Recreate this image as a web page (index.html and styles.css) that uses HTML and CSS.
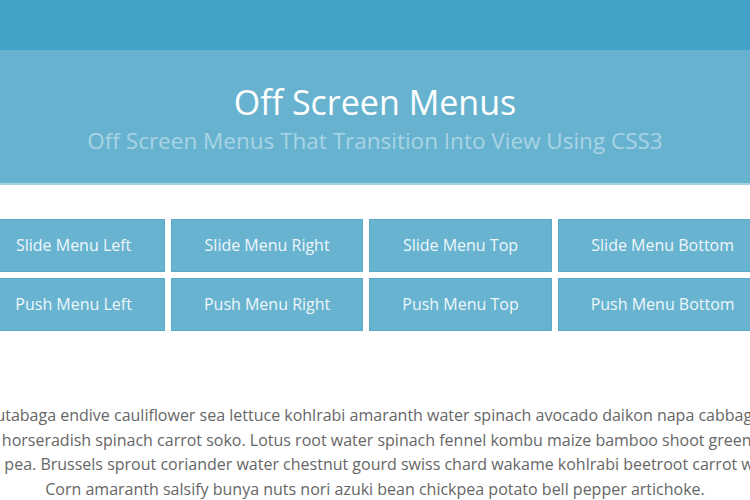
FILE: index.html
```html
<!DOCTYPE html>
<html>

<head>
  <title>Off Screen Menus</title>
  <link rel="stylesheet" href="styles.css">
</head>

<body>
  <div class="topbar"></div>
  <header class="intro">
    <h1 class="intro-title">Off Screen Menus</h1>
    <p class="intro-sub">Off Screen Menus That Transition Into View Using CSS3</p>
  </header>
  <div class="main">
    <nav class="menu-grid">
      <a class="menu-btn">Slide Menu Left</a>
      <a class="menu-btn">Slide Menu Right</a>
      <a class="menu-btn">Slide Menu Top</a>
      <a class="menu-btn">Slide Menu Bottom</a>
      <a class="menu-btn">Push Menu Left</a>
      <a class="menu-btn">Push Menu Right</a>
      <a class="menu-btn">Push Menu Top</a>
      <a class="menu-btn">Push Menu Bottom</a>
    </nav>
    <p class="veggies">
      rutabaga endive cauliflower sea lettuce kohlrabi amaranth water spinach avocado daikon napa cabbage<br>
      raisin horseradish spinach carrot soko. Lotus root water spinach fennel kombu maize bamboo shoot green bean<br>
      gram corn pea. Brussels sprout coriander water chestnut gourd swiss chard wakame kohlrabi beetroot carrot watercress.<br>
      Corn amaranth salsify bunya nuts nori azuki bean chickpea potato bell pepper artichoke.
    </p>
  </div>
</body>

</html>
```

FILE: styles.css
```css
body, html {
  margin: 0;
  padding: 0;
}

body {
  background: #fff;
  font-family: "Open Sans", "Noto Sans", sans-serif;
  overflow: hidden;
}

.topbar {
  height: 50px;
  background: #42a2c7;
}

.intro {
  background: #67b3cf;
  border-bottom: 2px solid #a3d2e3;
  padding: 32px 0 28px;
  text-align: center;
}

.intro-title {
  margin: 0;
  font-size: 34px;
  font-weight: 400;
  line-height: 40px;
  color: #fff;
}

.intro-sub {
  margin: 5px 0 0;
  font-size: 22.5px;
  line-height: 28px;
  color: #a8d4e5;
}

/* wider than the window, so it hangs over both edges */
.main {
  display: flex;
  flex-direction: column;
  align-items: center;
}

.menu-grid {
  width: max-content;
  margin-top: 34px;
  display: grid;
  grid-template-columns: repeat(4, auto);
  gap: 6px;
}

.menu-btn {
  display: block;
  padding: 15px 32px;
  border: 1px solid #5ba9c8;
  background: #68b3cf;
  color: #eef7fb;
  font-size: 16px;
  font-weight: 500;
  line-height: 21px;
  text-align: center;
  white-space: nowrap;
}

.veggies {
  width: max-content;
  margin: 72px 0 0;
  font-size: 16px;
  line-height: 24.5px;
  color: #666;
  text-align: center;
  white-space: nowrap;
}
```
